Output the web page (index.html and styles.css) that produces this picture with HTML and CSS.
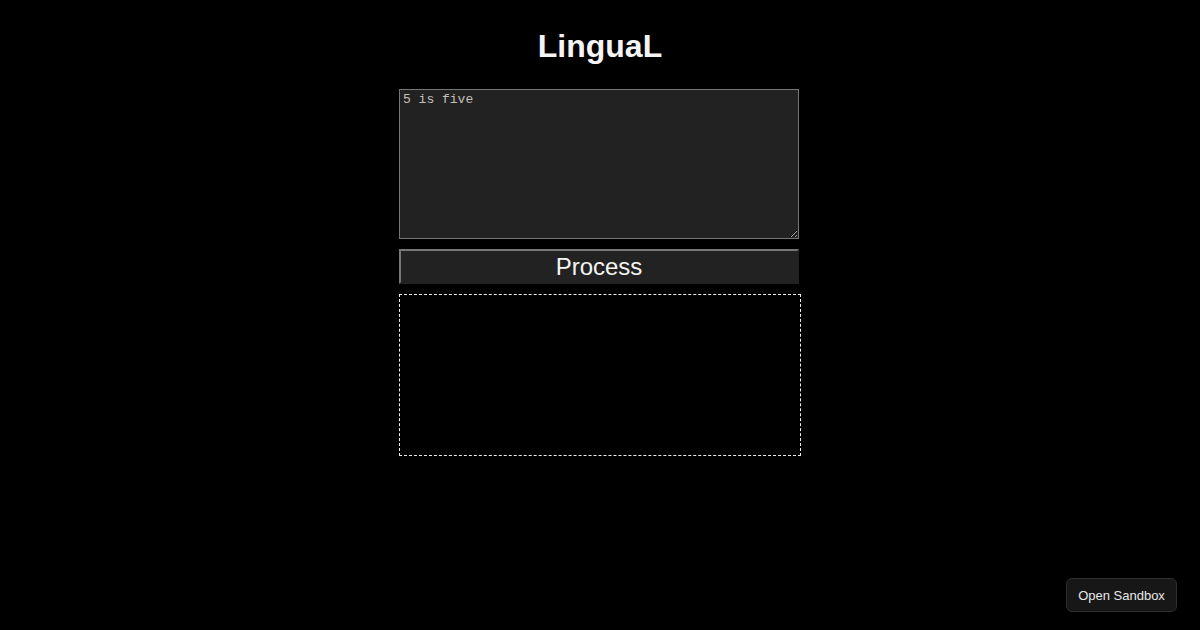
FILE: index.html
```html
<!DOCTYPE html>
<html lang="en">
<head>
<meta charset="utf-8">
<title>LinguaL</title>
<link rel="stylesheet" href="styles.css">
</head>
<body>
<main class="app">
  <h1 class="title">LinguaL</h1>
  <div class="column">
    <textarea class="input" spellcheck="false">5 is five</textarea>
    <button class="process" type="button">Process</button>
    <div class="output"></div>
  </div>
</main>
<button class="sandbox" type="button">Open Sandbox</button>
</body>
</html>
```

FILE: styles.css
```css
html, body {
  margin: 0;
  padding: 0;
  background: #000;
  color: #fff;
  height: 100%;
}
body {
  font-family: "Liberation Sans", Arial, sans-serif;
  overflow: hidden;
}
.app {
  display: flex;
  flex-direction: column;
  align-items: center;
  padding-top: 28px;
}
.title {
  margin: 0 0 24px;
  font-size: 32px;
  line-height: 37px;
  font-weight: bold;
  color: #f4f4f4;
}
.column {
  width: 402px;
  display: flex;
  flex-direction: column;
  align-items: flex-start;
  gap: 10px;
}
.input {
  box-sizing: border-box;
  width: 400px;
  height: 150px;
  margin: 0;
  padding: 2px 3px;
  background: #222;
  color: #c4c0b8;
  border: 1px solid #767676;
  font-family: "Liberation Mono", "Courier New", monospace;
  font-size: 13px;
  line-height: 16px;
  resize: both;
  outline: none;
}
.process {
  box-sizing: border-box;
  width: 400px;
  height: 35px;
  margin: 0;
  padding: 0;
  background: #222;
  color: #f4f4f4;
  border-style: solid;
  border-width: 2px;
  border-color: #777 #222 #222 #777;
  font-family: "Liberation Sans", Arial, sans-serif;
  font-size: 24px;
  line-height: 28px;
}
.output {
  box-sizing: border-box;
  width: 402px;
  height: 162px;
  border: 1px dashed #eee;
}
.sandbox {
  position: fixed;
  right: 23px;
  bottom: 18px;
  box-sizing: border-box;
  width: 111px;
  height: 34px;
  padding: 0;
  background: #171717;
  color: #e8e8e8;
  border: 1px solid #2e2e2e;
  border-radius: 6px;
  font-family: "Liberation Sans", Arial, sans-serif;
  font-size: 13px;
}
```
